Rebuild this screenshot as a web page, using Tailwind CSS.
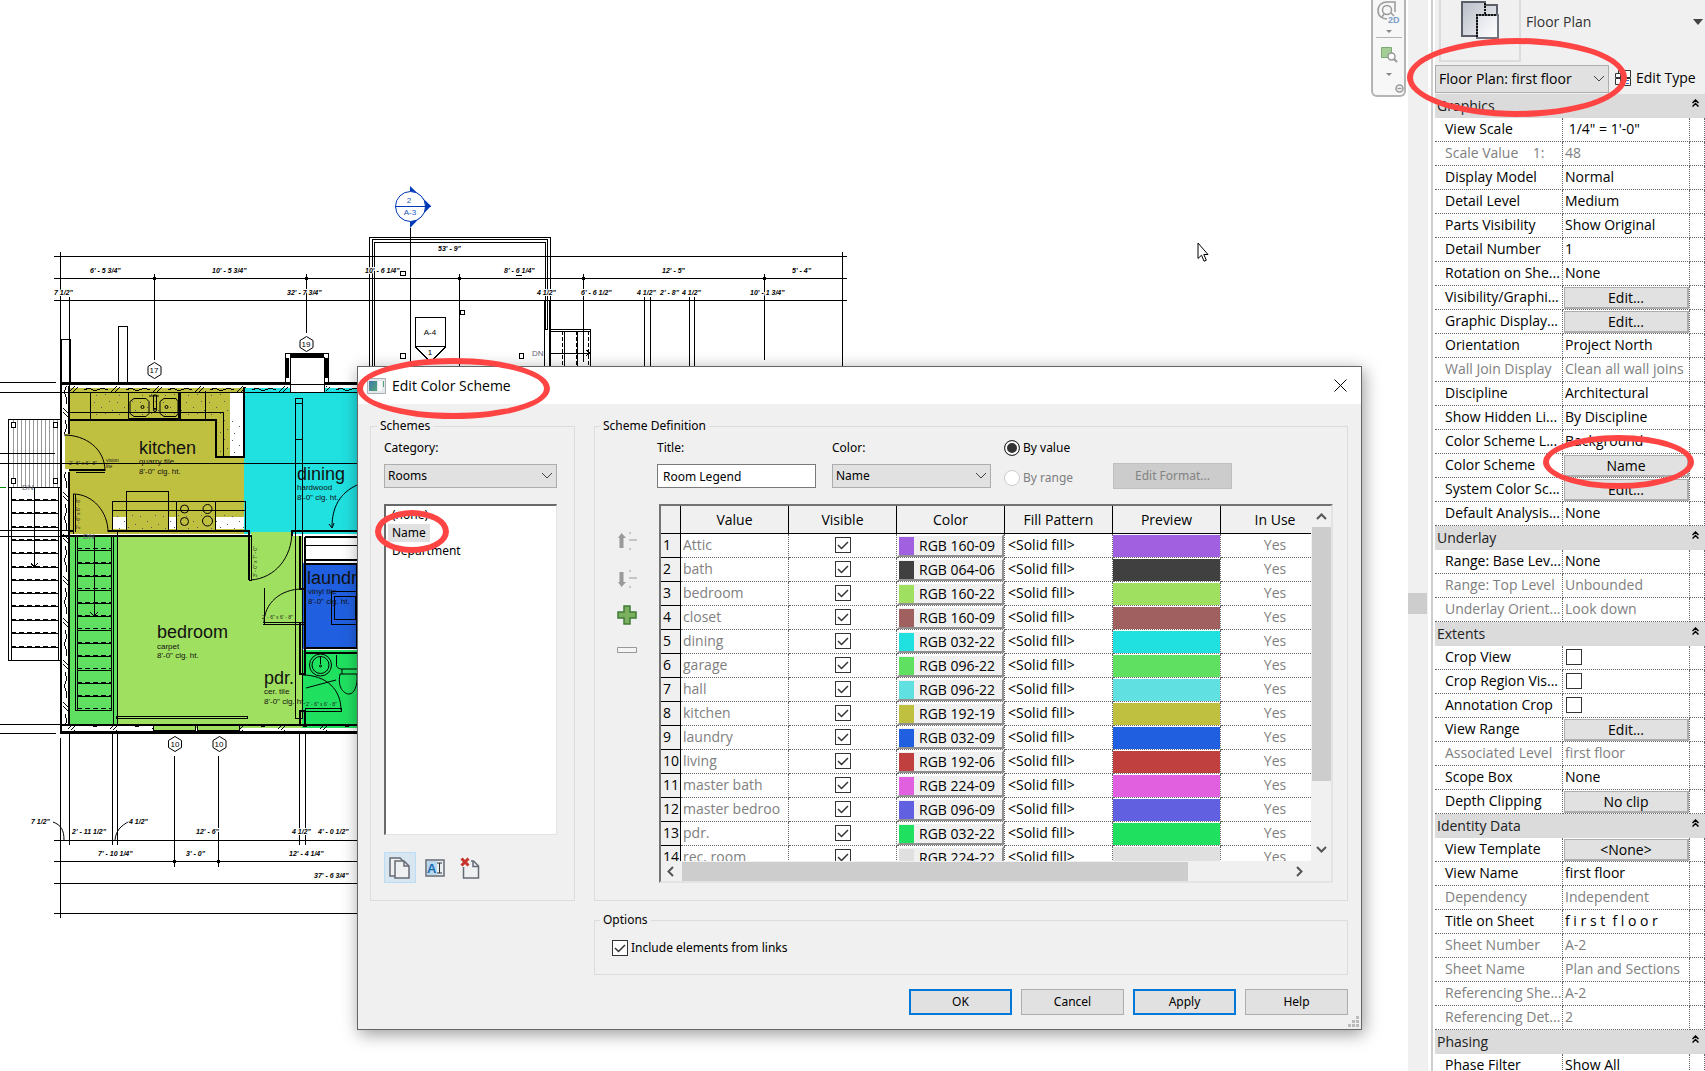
<!DOCTYPE html>
<html lang="en">
<head>
<meta charset="utf-8">
<title>Edit Color Scheme</title>
<script src="https://cdn.jsdelivr.net/npm/@tailwindcss/browser@4"></script>
</head>
<body class="relative flex h-screen overflow-hidden bg-white font-['Open_Sans',sans-serif] text-sm text-black">

<!-- Drawing area -->
<main class="relative min-w-0 flex-1 overflow-hidden">
  <svg class="block h-[930px] w-[860px]" viewBox="0 0 860 930" fill="none" stroke="#000" shape-rendering="crispEdges" font-family="Liberation Sans, sans-serif" role="img" aria-label="First floor plan">
    <defs>
      <pattern id="wallH" width="42" height="8" patternUnits="userSpaceOnUse" y="386"><path d="M0 4l5-2 6 3 7-3 6 2M26 7l7-7M29 8l7-7" stroke="#000"/></pattern>
      <pattern id="wallV" width="8" height="42" patternUnits="userSpaceOnUse" x="62"><path d="M3 0l2 7-3 7 3 7-1 5M1 30l6 6M1 34l6 6M6 0v25" stroke="#000"/></pattern>
      <pattern id="stipple" width="23" height="19" patternUnits="userSpaceOnUse"><path d="M2 3h1M9 8h1M17 2h1M13 14h1M4 15h1M20 11h1" stroke="#556"/></pattern>
      <pattern id="deck" width="4" height="8" patternUnits="userSpaceOnUse"><path d="M1.500 0v8" stroke="#999"/></pattern>
    </defs>

    <!-- room fills -->
    <g stroke="none">
      <path fill="#c0c040" d="M65 388h179v146H69v-65h-4z"/>
      <path fill="#fff" d="M230 393h14v64h-14zM113 517h132v12H113z"/>
      <path fill="#c0c040" d="M127 492h42v38h-42zM177 502h39v28h-39z"/>
      <path fill="#20e0e0" d="M244 388h113v146H244z"/>
      <path fill="#fff" d="M290 382h35v10h-35z"/>
      <path fill="#a0e060" d="M117 536h185v192H117zM251 532h41v6h-41z"/>
      <path fill="#60e060" d="M69 536h48v189H69z"/>
      <path fill="#2060e0" d="M303 563h54v86h-54z"/>
      <path fill="#20e060" d="M302 650h55v78h-55z"/>
      <path fill="#fff" d="M305 537h52v24h-52z"/>
      <path fill="url(#stipple)" d="M90 394h140v25H90zM217 420h27v36h-27zM113 511h132v18H113z"/>
      <path fill="url(#wallH)" d="M70 386h220v6H70zM326 386h31v6h-31z"/>
      <path fill="#fff" d="M62 726h92v6H62zM62 386h7v48h-7zM62 472h7v254h-7z"/>
      <path fill="url(#wallH)" d="M62 725h92v7H62zM240 725h117v7H240z"/>
      <path fill="url(#wallV)" d="M62 386h7v48h-7zM62 472h7v254h-7z"/>
      <path fill="url(#deck)" d="M11 420h48v67H11z"/>
    </g>

    <!-- dimension strings, top -->
    <path d="M54 256.500h793M54 278.500h793M54 300.500h793M60.500 252v132M69.500 297v92M154.500 274v86M306.500 274v59M459.500 274v92M583.500 274v88M644.500 297v69M650.500 297v69M689.500 297v69M694.500 297v69M764.500 274v86M842.500 252v114M410.500 228v138"/>
    <!-- garage outline -->
    <path d="M369.500 366V237.500h181V366M372.500 366V239.500h175V329M374.500 366V242.500h171V329h2M544.500 300v66M549.500 300v66"/>
    <path d="M118.500 382v-56h9v56M61.500 382v-43h9v43"/>
    <path d="M415.500 317.500h30v29h-30zM415.500 347l15 15 15-15M400.500 271.500h5v4h-5zM460.500 310.500h4v4h-4zM400.500 353.500h5v5h-5zM519.500 353.500h4v5h-4zM516 275.500h6"/>
    <path d="M550 329.500h40.500V366M550 331.500h40M564.500 331v35M577.500 331v35M550 353.500h40M586 350l4 3-4 3"/>
    <path stroke-dasharray="4 2" d="M562.500 331v35M576.500 331v35M588.500 331v35"/>
    <g fill="#000" stroke="none">
      <circle cx="154.500" cy="278.500" r="2"/><circle cx="306.500" cy="278.500" r="2"/><circle cx="459.500" cy="278.500" r="2"/><circle cx="583.500" cy="278.500" r="2"/><circle cx="764.500" cy="278.500" r="2"/>
    </g>

    <!-- section marker -->
    <g stroke="#0038b8" shape-rendering="auto">
      <path fill="#0038b8" stroke="none" d="M410 186l21 20-21 22z"/>
      <circle cx="410.500" cy="206.500" r="15" fill="#fff"/>
      <path d="M395 206.500h36"/>
    </g>
    <g fill="#2456c0" stroke="none" font-size="8" text-anchor="middle"><text x="409" y="203">2</text><text x="410" y="215">A-3</text></g>

    <!-- bay -->
    <path d="M285.500 382V353.500h43V382M290.500 382v-24.500h34V382"/>
    <path stroke-width="3" d="M290 355.500h34M287.500 358v20M326.500 358v20"/>
    <path d="M290.500 382v10M324.500 382v10M290 384.500h34"/>

    <!-- exterior walls -->
    <path stroke-width="3" d="M60 383.500h230M325 383.500h32M60 732.500h297"/>
    <path stroke-width="2" d="M61 382v352M69 387v47M69 472v253M60 725h297"/>
    <path d="M0 382.500h56M0 392.500h357M0 453.500h55M0 463.500h357M0 530.500h73M0 536.500h60M0 724.500h60M0 733.500h56"/>
    <path stroke="#080" d="M0 487.500h6"/>

    <!-- deck and exterior stair -->
    <path d="M60 419.500H8.500V660.500H60M11.500 487v173M58.500 487v173M34.500 487v80M31 563l3 4 4-4"/>
    <path fill="#fff" d="M11.500 422.500h4v5h-4zM53.500 422.500h4v5h-4zM11.500 478.500h4v5h-4zM53.500 478.500h4v5h-4z"/>
    <path d="M8 487.500h52M11 500.500h47M11 513.500h47M11 527.500h47M11 540.500h47M11 553.500h47M11 567.500h47M11 580.500h47M11 593.500h47M11 606.500h47M11 620.500h47M11 633.500h47M11 647.500h47M11 660.500h47"/>
    <path stroke-dasharray="5 3" d="M11 499.500h47M11 512.500h47M11 526.500h47M11 539.500h47M11 552.500h47M11 566.500h47M11 579.500h47M11 592.500h47M11 605.500h47M11 619.500h47M11 632.500h47M11 646.500h47"/>

    <!-- kitchen -->
    <path d="M69 412.500h154V456M90.500 392v27M205.500 391v28"/>
    <path stroke-width="2" d="M69 420h147v36.500h29M244 387v70M180 392v27"/>
    <path d="M128.500 392.500h50v26h-50zM134 398.500h12l3 3v12l-3 3h-12l-4-3v-12zM164 398.500h12l2 3v12l-2 3h-12l-4-3v-12zM153.500 395h3v14h-3zM149 396h10" shape-rendering="auto"/>
    <g shape-rendering="auto"><circle cx="142.500" cy="407" r="1.500"/><circle cx="166.500" cy="407" r="1.500"/><circle cx="155" cy="410" r="1.500"/></g>
    <path d="M112.500 530v-28.500h133V530M112 510.500h133M126.500 491.500h42v39h-42zM176.500 501.500h39v29h-39z"/>
    <g shape-rendering="auto"><circle cx="184.500" cy="509" r="4"/><circle cx="207.500" cy="509" r="4.500"/><circle cx="184.500" cy="521.500" r="4"/><circle cx="207.500" cy="521" r="5"/></g>
    <path stroke-width="2" d="M108 531h140.500v6M69 531h4M60 536h192M249 537v43M292 536v-5h65M305 537h52M69 470h36"/>
    <path d="M76 472.500h29M73.500 494v40M75.500 494v38M251.500 537v43h-3"/>
    <g shape-rendering="auto">
      <path d="M64 435c22 0 41 14 41 36M73 494c20 0 35 18 35 38M357 485c-17 8-25 22-25 42M329 524l3 4 2-5M251 580c24-2 41-22 41-49M302 589c-21 0-38 14-38 34"/>
    </g>
    <!-- dining partition -->
    <path d="M295.500 398.500h7v320h-7zM295 403.500h7M295 439.500h7"/>

    <!-- interior stair -->
    <path d="M75.500 537v173.500h36V537M77.500 537v173M113.500 537v188M117.500 530v195M94.500 537v79M90 612l4 4 4-4"/>
    <path d="M77 550.500h34M77 563.500h34M77 576.500h34M77 590.500h34M77 603.500h34M77 616.500h34M77 630.500h34M77 643.500h34M77 656.500h34M77 670.500h34M77 683.500h34M77 696.500h34"/>
    <path stroke-dasharray="5 3" d="M77 548.500h34M77 562.500h34M77 575.500h34M77 588.500h34M77 602.500h34M77 615.500h34M77 628.500h34M77 642.500h34M77 655.500h34M77 668.500h34M77 682.500h34M77 695.500h34M77 708.500h34"/>

    <!-- bedroom -->
    <path d="M116.500 716.500h131v2h-131zM263 622.500h42M263 624.500h42M264.500 588v36"/>
    <path stroke-width="2" d="M300 536v53h5v-52M300 622v52h5v-50M305 560h52M305 564h52v84h-52zM300 725v-14h5v14"/>
    <path fill="#a0e060" d="M153.500 725.500h42v5h-42zM197.500 725.500h42v5h-42z"/>
    <!-- laundry and powder room fixtures -->
    <path d="M305 545.500h52M331.500 591.500h26v33h-26zM334.500 596.500h21v23h-21z"/>
    <path stroke-width="2" d="M357 653h-52v22"/>
    <g shape-rendering="auto">
      <circle cx="320.500" cy="665" r="11"/><circle cx="320.500" cy="665" r="8.500"/><circle cx="320.500" cy="666" r="1"/><path d="M320.500 656v8M336.500 655v10c0 2 2 4 5 4h16M342 669v5M340 674c-3 15 5 20 9 20 5 0 9-8 8-20zM302 675c25 0 39 15 39 35M306 688l30-8"/>
    </g>
    <path d="M305 708.500h36v3h-36z"/>

    <!-- dimension strings, bottom -->
    <path d="M54 840.500h303M54 861.500h303M54 883.500h303M54 913.500h303M60.500 738v180M69.500 733v112M112.500 733v112M117.500 733v112M174.500 756v111M218.500 756v111M299.500 733v112M305.500 733v112"/>
    <path d="M53 822c8 3 11 8 11 18M130 821c-10 5-14 10-15 19" shape-rendering="auto"/>
    <g fill="#000" stroke="none"><circle cx="174.500" cy="861.500" r="2"/><circle cx="218.500" cy="861.500" r="2"/></g>

    <!-- window tags -->
    <g fill="#fff" shape-rendering="auto">
      <path d="M154.500 362.500l6.500 4v8l-6.500 4-6.500-4v-8zM306.500 336.500l6.500 4v7l-6.500 4-6.500-4v-7zM175 736.500l6.500 4v7l-6.500 4-6.500-4v-7zM219.500 736.500l6.500 4v7l-6.500 4-6.500-4v-7z"/>
    </g>
    <g fill="#000" stroke="none" font-size="8" text-anchor="middle">
      <text x="154" y="373">17</text><text x="306" y="347">19</text><text x="175" y="747">10</text><text x="219" y="747">10</text>
      <text x="430" y="335">A-4</text><text x="430" y="355">1</text>
    </g>

    <!-- dimension text -->
    <g fill="#000" stroke="#fff" stroke-width="2" paint-order="stroke" font-size="7" font-weight="700" font-style="italic">
      <text x="90" y="273">6' - 5 3/4"</text><text x="212" y="273">10' - 5 3/4"</text><text x="365" y="273">10' - 6 1/4"</text><text x="504" y="273">8' - 6 1/4"</text><text x="662" y="273">12' - 5"</text><text x="792" y="273">5' - 4"</text>
      <text x="438" y="251">53' - 9"</text>
      <text x="54" y="295">7 1/2"</text><text x="287" y="295">32' - 7 3/4"</text><text x="537" y="295">4 1/2"</text><text x="581" y="295">6' - 6 1/2"</text><text x="637" y="295">4 1/2"</text><text x="660" y="295">2' - 8"</text><text x="682" y="295">4 1/2"</text><text x="750" y="295">10' - 1 3/4"</text>
      <text x="31" y="824">7 1/2"</text><text x="129" y="824">4 1/2"</text><text x="72" y="834">2' - 11 1/2"</text><text x="196" y="834">12' - 6"</text><text x="292" y="834">4 1/2"</text><text x="318" y="834">4' - 0 1/2"</text>
      <text x="98" y="856">7' - 10 1/4"</text><text x="186" y="856">3' - 0"</text><text x="289" y="856">12' - 4 1/4"</text><text x="314" y="878">37' - 6 3/4"</text>
    </g>

    <!-- room tags -->
    <g fill="#111" stroke="none" font-size="18">
      <text x="139" y="454">kitchen</text><text x="297" y="480">dining</text><text x="157" y="638">bedroom</text><text x="264" y="684">pdr.</text><text x="307" y="584">laundry</text>
    </g>
    <g fill="#111" stroke="none" font-size="8">
      <text x="139" y="464">quarry tile</text><text x="139" y="474">8'-0" clg. ht.</text>
      <text x="297" y="490">hardwood</text><text x="297" y="500">8'-0" clg. ht.</text>
      <text x="157" y="649">carpet</text><text x="157" y="658">8'-0" clg. ht.</text>
      <text x="264" y="694">cer. tile</text><text x="264" y="704">8'-0" clg. ht.</text>
      <text x="308" y="594">vinyl tile</text><text x="308" y="604">8'-0" clg. ht.</text>
      <g fill="#667"><text x="22" y="490">DN</text><text x="532" y="356">DN</text><text x="83" y="539">DN</text></g>
    </g>
    <g fill="#222" stroke="none" font-size="5">
      <text x="69" y="465">2'- 6" x 6'- 8"</text><text x="106" y="462">vision</text><text x="106" y="468">lite</text>
      <text x="262" y="619">2' - 6" x 6' - 8"</text><text x="306" y="706">2' - 6" x 6' - 8"</text>
      <text transform="translate(80 529) rotate(-90)">2' - 6" x 6' - 8"</text><text transform="translate(257 577) rotate(-90)">3' - 0" x 7' - 0"</text>
    </g>
  </svg>

  <!-- Mouse pointer -->
  <svg class="absolute top-[242px] left-[1197px] h-[20px] w-[12px]" viewBox="0 0 12 20" fill="#fff" stroke="#000"><path d="M1 1v15.500l3.500-3.300 2.500 6 2.300-1-2.500-5.700H11z"/></svg>

  <!-- Navigation bar -->
  <nav class="absolute top-0 right-[2px] flex h-[97px] w-[35px] flex-col items-center rounded-b-md border-2 border-t-0 border-[#b4b4b4] bg-[#f7f7f7]">
    <button aria-label="Steering wheel" class="block h-[25px] w-[26px]">
      <svg class="h-[25px] w-[26px]" viewBox="0 0 26 25" fill="none" stroke="#9a9a9a" stroke-width="1.500"><path d="M11 19C6 19 2 16 2 10.500 2 5 6 2 11 2h8v10"/><circle cx="11" cy="10" r="4.500"/><path d="M6 17l2-3M15 13l3 3"/><text x="12" y="23" font-family="Liberation Sans, sans-serif" font-size="9" font-weight="700" fill="#7c9cc8" stroke="none">2D</text></svg>
    </button>
    <svg class="mt-[5px] h-[3px] w-[6px]" viewBox="0 0 6 3" fill="#888"><path d="M0 0h6L3 3z"/></svg>
    <div class="mt-1 h-px w-[26px] bg-[#b4b4b4]"></div>
    <button aria-label="Zoom region" class="mt-2 block h-[17px] w-[18px]">
      <svg class="h-[17px] w-[18px]" viewBox="0 0 18 17"><path fill="#a3cf97" stroke="#7fa877" d="M1.500 1.500h10v10h-10z"/><circle cx="11.500" cy="10.500" r="3.500" fill="#fff" stroke="#999" stroke-width="1.500"/><path d="M14 13l3 3" stroke="#999" stroke-width="2"/></svg>
    </button>
    <svg class="mt-[10px] h-[3px] w-[6px]" viewBox="0 0 6 3" fill="#888"><path d="M0 0h6L3 3z"/></svg>
    <svg class="mt-auto mb-[2px] ml-[22px] h-[9px] w-[9px]" viewBox="0 0 9 9" fill="none" stroke="#999" stroke-width="1.500"><circle cx="4.500" cy="4.500" r="3.500"/><path d="M2.500 4.500h4"/></svg>
  </nav>
</main>

<!-- Drawing area scrollbar -->
<div class="w-[20px] shrink-0 bg-[#f0f0f0] pt-[593px]"><div class="h-[21px] w-[19px] bg-[#cdcdcd]"></div></div>

<!-- Properties palette -->
<aside class="relative ml-[3px] w-[274px] shrink-0 border-l-2 border-[#cdcdcd] bg-white pl-[2px]">
  <header class="flex h-[64px] items-start bg-[#f0f0f0] pl-1">
    <div class="flex h-[62px] w-[82px] justify-center border-2 border-t-0 border-[#dcdcdc]">
      <svg class="h-[40px] w-[40px]" viewBox="0 0 40 40"><defs><linearGradient id="fp" x1="0" y1="0" x2="1" y2="1"><stop offset="0" stop-color="#b9bec8"/><stop offset="1" stop-color="#f4f5f7"/></linearGradient><linearGradient id="fq" x1="0" y1="0" x2="1" y2="1"><stop offset="0" stop-color="#dfe2e8"/><stop offset="1" stop-color="#fff"/></linearGradient></defs><path fill="url(#fp)" stroke="#5a5e68" stroke-width="2" d="M2 2h23v3h12v33H17v-2H2z"/><path fill="url(#fq)" stroke="#70747e" stroke-width="2" d="M17 15h21v23H17z"/><path d="M25 3v12M17 37V15h20" fill="none" stroke="#111" stroke-width="2" stroke-dasharray="2 1"/></svg>
    </div>
    <span class="ml-[5px] pt-[12px] leading-5 text-[#333]">Floor Plan</span>
    <svg class="mt-[19px] mr-[2px] ml-auto h-[6px] w-[10px]" viewBox="0 0 10 6" fill="#444"><path d="M0 0h10L5 6z"/></svg>
  </header>
  <div class="flex h-[30px] items-center bg-[#f0f0f0]">
    <div class="grid w-[174px] items-center">
      <select aria-label="Instance" class="col-start-1 row-start-1 h-[28px] appearance-none border border-[#adadad] bg-[#e1e1e1] pl-[3px] text-sm"><option>Floor Plan: first floor</option></select>
      <svg class="pointer-events-none col-start-1 row-start-1 mr-[5px] h-[6px] w-[10px] justify-self-end" viewBox="0 0 10 6" fill="none" stroke="#444"><path d="M0 0l5 5 5-5"/></svg>
    </div>
    <button class="ml-[6px] flex items-center gap-[5px] pb-[2px] whitespace-nowrap">
      <svg class="h-[16px] w-[16px]" viewBox="0 0 16 16" fill="#fff" stroke="#333"><path d="M.5 3.500h5v4h-5zM.5 8.500h5v6h-5zM3.500.5h12v7h-10v-4h-2zM5.500 8.500h10v7h-10z"/><path d="M11 10.500h3M11 13.500h3" stroke="#36c"/></svg>
      Edit Type
    </button>
  </div>
  <table class="w-[270px] table-fixed border-separate border-spacing-0 whitespace-nowrap">
    <colgroup><col class="w-[128px]"><col class="w-[127px]"><col class="w-[15px]"></colgroup>
    <tbody id="props"></tbody>
  </table>
  <div class="pointer-events-none absolute top-[38px] left-[-26px] h-[79px] w-[220px] rounded-[50%] border-6 border-[#ff4444]"></div>
  <div class="pointer-events-none absolute top-[435px] left-[110px] h-[54px] w-[151px] rounded-[50%] border-6 border-[#ff4444]"></div>
</aside>

<!-- Edit Color Scheme dialog -->
<section role="dialog" aria-labelledby="dlg" class="absolute top-[366px] left-[357px] w-[1005px] border border-[#666] bg-[#f0f0f0] font-['Noto_Sans',sans-serif] text-xs leading-4 shadow-[2px_4px_16px_rgba(0,0,0,0.4)]">
  <header class="flex h-[37px] items-center bg-white pr-[14px] pl-[9px]">
    <svg class="h-[16px] w-[19px]" viewBox="0 0 19 16"><defs><linearGradient id="ic" x1="0" y1="0" x2="1" y2="1"><stop offset="0" stop-color="#4477a8"/><stop offset="1" stop-color="#4fa67a"/></linearGradient></defs><path d="M.5.5h18v15H.5z" fill="#e4e8ea" stroke="#aab0b4"/><path d="M2 3h8v10H2z" fill="url(#ic)"/><path d="M11 3h4v10h-4z" fill="#f8f8f8"/><path d="M16 3h1v6h-1z" fill="#4fa67a"/></svg>
    <h1 id="dlg" class="ml-[6px] font-['Open_Sans',sans-serif] text-sm">Edit Color Scheme</h1>
    <button aria-label="Close" class="ml-auto"><svg class="h-[13px] w-[13px]" viewBox="0 0 13 13" fill="none" stroke="#000"><path d="M.5.5l12 12M12.500.5l-12 12"/></svg></button>
  </header>

  <div class="grid grid-cols-[205px_1fr] gap-x-[19px] gap-y-[11px] pt-[14px] pr-[13px] pl-3">
    <fieldset class="border border-[#dcdcdc] pr-[17px] pb-4 pl-[13px]">
      <legend class="-ml-[7px] px-[3px]">Schemes</legend>
      <label for="cat" class="block pt-[5px] pb-[7px] leading-[18px]">Category:</label>
      <div class="grid items-center">
        <select id="cat" class="col-start-1 row-start-1 h-[24px] appearance-none border border-[#adadad] bg-[#e1e1e1] pl-[3px]"><option>Rooms</option></select>
        <svg class="pointer-events-none col-start-1 row-start-1 mr-[5px] h-[6px] w-[10px] justify-self-end" viewBox="0 0 10 6" fill="none" stroke="#444"><path d="M0 0l5 5 5-5"/></svg>
      </div>
      <ul role="listbox" aria-label="Schemes" class="mt-4 flex h-[331px] flex-col items-start border-t-2 border-r border-b border-l-2 border-t-[#696969] border-r-[#e3e3e3] border-b-[#e3e3e3] border-l-[#696969] bg-white pl-[2px] leading-[18px]">
        <li role="option" class="px-1">(none)</li>
        <li role="option" aria-selected="true" class="bg-[#e1e1e1] px-1">Name</li>
        <li role="option" class="px-1">Department</li>
      </ul>
      <div class="mt-[17px] flex gap-[3px]">
        <button aria-label="Duplicate" class="flex h-[31px] w-[32px] items-center justify-center border border-[#bcdcf4] bg-[#d8e6f2]">
          <svg class="h-[22px] w-[22px]" viewBox="0 0 22 22" fill="#eef0f2" stroke="#666a74" stroke-width="1.500"><path d="M1 1h10l3 3v15H1z"/><path d="M6 4h9l5 5v12H6z"/><path d="M15 4v5h5" fill="none"/></svg>
        </button>
        <button aria-label="Rename" class="flex h-[31px] w-[32px] items-center justify-center">
          <svg class="h-[18px] w-[20px]" viewBox="0 0 20 18"><path d="M1 1h18v16H1z" fill="#e8eef2" stroke="#666a74" stroke-width="1.500"/><path d="M2 2h10v14H2z" fill="#b8d8ec"/><text x="2" y="14" font-size="13" font-weight="700" font-family="Liberation Sans, sans-serif" fill="#1c6cb4">A</text><path d="M12 4h2.500M17 4h-2.500v10M12 14h5" fill="none" stroke="#333"/></svg>
        </button>
        <button aria-label="Delete" class="flex h-[31px] w-[32px] items-center justify-center">
          <svg class="h-[22px] w-[20px]" viewBox="0 0 20 22"><path d="M3.500 10v11h15V9l-5-5H11" fill="#eef0f2" stroke="#666a74" stroke-width="1.500"/><path d="M13 4v5.500h5.500" fill="none" stroke="#666a74" stroke-width="1.500"/><path d="M1.500 1.500l7 7M8.500 1.500l-7 7" stroke="#c8342c" stroke-width="3"/></svg>
        </button>
      </div>
    </fieldset>

    <fieldset class="min-w-0 border border-[#dcdcdc] pr-[14px] pb-[17px] pl-[22px]">
      <legend class="-ml-[17px] px-[3px]">Scheme Definition</legend>
      <div class="flex gap-5">
        <div class="flex w-5 shrink-0 flex-col pt-[98px]">
          <button aria-label="Move up"><svg class="h-[20px] w-[20px]" viewBox="0 0 20 20" fill="#999"><path d="M4.500 1L9 6H6.500v10h-4V6H1z"/><path d="M12 7.500h8v1h-8zM12 .5h2v1h-2zM12 16.500h2v1h-2z"/></svg></button>
          <button aria-label="Move down" class="mt-[18px]"><svg class="h-[20px] w-[20px]" viewBox="0 0 20 20" fill="#999"><path d="M4.500 17L9 12H6.500V2h-4v10H1z"/><path d="M12 7.500h8v1h-8zM12 .5h2v1h-2zM12 16.500h2v1h-2z"/></svg></button>
          <button aria-label="Add value" class="mt-[15px]"><svg class="h-[20px] w-[20px]" viewBox="0 0 20 20"><path d="M7 1h6v6h6v6h-6v6H7v-6H1V7h6z" fill="#7cb060" stroke="#3f7a34" stroke-width="1.500"/></svg></button>
          <button aria-label="Remove value" class="mt-[22px]"><svg class="h-[7px] w-[20px]" viewBox="0 0 20 7"><path d="M.5.5h19v5H.5z" fill="#f4f4f4" stroke="#999"/></svg></button>
        </div>
        <div class="min-w-0 flex-1">
          <div class="flex items-start">
            <div class="w-[159px]">
              <label for="ttl" class="block pt-[5px] pb-[7px] leading-[18px]">Title:</label>
              <input id="ttl" value="Room Legend" class="block h-[24px] w-full border border-[#7a7a7a] bg-white pl-[5px]">
            </div>
            <div class="ml-4 w-[159px]">
              <label for="clr" class="block pt-[5px] pb-[7px] leading-[18px]">Color:</label>
              <div class="grid items-center">
                <select id="clr" class="col-start-1 row-start-1 h-[24px] appearance-none border border-[#adadad] bg-[#e1e1e1] pl-[3px]"><option>Name</option></select>
                <svg class="pointer-events-none col-start-1 row-start-1 mr-[5px] h-[6px] w-[10px] justify-self-end" viewBox="0 0 10 6" fill="none" stroke="#444"><path d="M0 0l5 5 5-5"/></svg>
              </div>
            </div>
            <div class="ml-[13px] flex w-[109px] flex-col gap-[14px] pt-[6px]">
              <label class="flex items-center gap-[3px]"><input type="radio" name="by" checked class="m-0 h-4 w-4 appearance-none rounded-full border border-[#333] bg-[#333] shadow-[inset_0_0_0_2px_#fff]">By value</label>
              <label class="flex items-center gap-[3px] text-[#7d7d7d]"><input type="radio" name="by" disabled class="m-0 h-4 w-4 appearance-none rounded-full border border-[#ccc] bg-white">By range</label>
            </div>
            <button disabled class="mt-[29px] h-[26px] w-[119px] border border-[#bfbfbf] bg-[#cccccc] text-[#838383]">Edit Format...</button>
          </div>

          <div class="mt-[15px] ml-[2px] grid h-[379px] grid-cols-[1fr_20px] grid-rows-[1fr_20px] border-2 border-t-[#737373] border-r-[#e3e3e3] border-b-[#e3e3e3] border-l-[#737373] font-['Open_Sans',sans-serif] text-sm">
            <div class="min-h-0 min-w-0 overflow-hidden bg-white">
              <table class="w-[668px] table-fixed border-separate border-spacing-0 whitespace-nowrap">
                <colgroup><col class="w-[20px]"><col class="w-[108px]"><col class="w-[108px]"><col class="w-[108px]"><col class="w-[108px]"><col class="w-[108px]"><col class="w-[108px]"></colgroup>
                <thead>
                  <tr class="h-[28px] bg-[#f0f0f0]">
                    <th class="border-r border-b border-black p-0"></th>
                    <th class="border-r border-b border-black p-0 font-normal">Value</th>
                    <th class="border-r border-b border-black p-0 font-normal">Visible</th>
                    <th class="border-r border-b border-black p-0 font-normal">Color</th>
                    <th class="border-r border-b border-black p-0 font-normal">Fill Pattern</th>
                    <th class="border-r border-b border-black p-0 font-normal">Preview</th>
                    <th class="border-b border-black p-0 font-normal">In Use</th>
                  </tr>
                </thead>
                <tbody id="rows"></tbody>
              </table>
            </div>
            <div class="flex flex-col items-center bg-[#f0f0f0]">
              <svg class="mt-[7px] h-[7px] w-[11px]" viewBox="0 0 11 7" fill="none" stroke="#555" stroke-width="2"><path d="M1 6l4.500-4.500L10 6"/></svg>
              <div class="mt-[7px] h-[254px] w-[19px] bg-[#cdcdcd]"></div>
              <svg class="mt-auto mb-[8px] h-[7px] w-[11px]" viewBox="0 0 11 7" fill="none" stroke="#555" stroke-width="2"><path d="M1 1l4.500 4.500L10 1"/></svg>
            </div>
            <div class="flex items-center bg-[#f0f0f0]">
              <svg class="ml-[6px] h-[11px] w-[7px]" viewBox="0 0 7 11" fill="none" stroke="#555" stroke-width="2"><path d="M6 1L1.500 5.500 6 10"/></svg>
              <div class="ml-2 h-[19px] w-[506px] bg-[#cdcdcd]"></div>
              <svg class="mr-[8px] ml-auto h-[11px] w-[7px]" viewBox="0 0 7 11" fill="none" stroke="#555" stroke-width="2"><path d="M1 1l4.500 4.500L1 10"/></svg>
            </div>
            <div class="bg-[#f0f0f0]"></div>
          </div>
        </div>
      </div>
    </fieldset>

    <fieldset class="col-start-2 h-[63px] border border-[#dcdcdc] pl-[17px]">
      <legend class="-ml-[12px] px-[3px]">Options</legend>
      <label class="mt-3 flex items-center gap-[3px]">
        <span class="grid h-4 w-4"><input type="checkbox" checked class="col-start-1 row-start-1 h-4 w-4 appearance-none border border-[#333] bg-white"><svg class="pointer-events-none col-start-1 row-start-1 h-4 w-4" viewBox="0 0 16 16" fill="none" stroke="#333" stroke-width="1.500"><path d="M3 8l3.500 3.500L13 5"/></svg></span>
        Include elements from links
      </label>
    </fieldset>
  </div>

  <footer class="mt-[14px] flex justify-end gap-[9px] pr-[13px] pb-[14px]">
    <button class="h-[26px] w-[103px] border-2 border-[#0078d7] bg-[#e1e1e1]">OK</button>
    <button class="h-[26px] w-[103px] border border-[#adadad] bg-[#e1e1e1]">Cancel</button>
    <button class="h-[26px] w-[103px] border-2 border-[#0078d7] bg-[#e1e1e1]">Apply</button>
    <button class="h-[26px] w-[103px] border border-[#adadad] bg-[#e1e1e1]">Help</button>
  </footer>
  <svg class="absolute right-[2px] bottom-[2px] h-[11px] w-[11px]" viewBox="0 0 11 11" fill="#bbb"><path d="M8 0h3v3H8zM4 4h3v3H4zM8 4h3v3H8zM0 8h3v3H0zM4 8h3v3H4zM8 8h3v3H8z"/></svg>

  <div class="pointer-events-none absolute top-[-9px] left-[-1px] h-[61px] w-[193px] rounded-[50%] border-6 border-[#ff4444]"></div>
  <div class="pointer-events-none absolute top-[143px] left-[17px] h-[43px] w-[74px] rounded-[50%] border-6 border-[#ff4444]"></div>
</section>

<script>
const scheme = [
  ['Attic','RGB 160-09','#a060e0'],['bath','RGB 064-06','#404040'],['bedroom','RGB 160-22','#a0e060'],['closet','RGB 160-09','#a06060'],
  ['dining','RGB 032-22','#20e0e0'],['garage','RGB 096-22','#60e060'],['hall','RGB 096-22','#60e0e0'],['kitchen','RGB 192-19','#c0c040'],
  ['laundry','RGB 032-09','#2060e0'],['living','RGB 192-06','#c04040'],['master bath','RGB 224-09','#e060e0'],['master bedroo','RGB 096-09','#6060e0'],
  ['pdr.','RGB 032-22','#20e060'],['rec. room','RGB 224-22','#e0e0e0']
];
document.getElementById('rows').innerHTML = scheme.map(([name, rgb, color], i) => `
<tr class="h-[24px]">
  <th scope="row" class="border-r border-b border-black bg-[#f0f0f0] p-0 pb-[2px] pl-[2px] text-left font-normal">${i + 1}</th>
  <td class="overflow-hidden border-r border-b border-dotted border-[#666] p-0 pb-[2px] pl-[2px] text-[#808080]">${name}</td>
  <td class="border-r border-b border-dotted border-[#666] p-0 pb-px"><label class="mx-auto grid h-4 w-4"><input type="checkbox" checked aria-label="Show ${name}" class="col-start-1 row-start-1 h-4 w-4 appearance-none border border-[#333] bg-white"><svg class="pointer-events-none col-start-1 row-start-1 h-4 w-4" viewBox="0 0 16 16" fill="none" stroke="#333" stroke-width="1.500"><path d="M3 8l3.500 3.500L13 5"/></svg></label></td>
  <td class="border-r border-b border-dotted border-[#666] p-0"><button class="flex h-[23px] w-full items-center border-2 border-t-white border-r-[#909090] border-b-[#909090] border-l-white bg-[#f0f0f0]"><span class="h-[18px] w-[15px]" style="background:${color}"></span><span class="ml-[5px]">${rgb}</span></button></td>
  <td class="border-r border-b border-dotted border-[#666] p-0 pb-[2px] pl-[3px]">&lt;Solid fill&gt;</td>
  <td class="border-r border-b border-dotted border-[#666] p-0 pt-px"><div class="h-[22px]" style="background:${color}"></div></td>
  <td class="border-b border-dotted border-[#666] p-0 pb-[2px] text-center text-[#808080]">Yes</td>
</tr>`).join('');

// kind: h = group heading, b = button, c = tick box, d = read-only, t = text
const props = [
  ['h','Graphics'],['t','View Scale','&nbsp;1/4" = 1\'-0"'],['d','Scale Value &nbsp;&nbsp; 1:','48'],['t','Display Model','Normal'],['t','Detail Level','Medium'],
  ['t','Parts Visibility','Show Original'],['t','Detail Number','1'],['t','Rotation on She...','None'],['b','Visibility/Graphi...','Edit...'],['b','Graphic Display...','Edit...'],
  ['t','Orientation','Project North'],['d','Wall Join Display','Clean all wall joins'],['t','Discipline','Architectural'],['t','Show Hidden Li...','By Discipline'],
  ['t','Color Scheme L...','Background'],['b','Color Scheme','Name'],['b','System Color Sc...','Edit...'],['t','Default Analysis...','None'],
  ['h','Underlay'],['t','Range: Base Lev...','None'],['d','Range: Top Level','Unbounded'],['d','Underlay Orient...','Look down'],
  ['h','Extents'],['c','Crop View'],['c','Crop Region Vis...'],['c','Annotation Crop'],['b','View Range','Edit...'],['d','Associated Level','first floor'],
  ['t','Scope Box','None'],['b','Depth Clipping','No clip'],
  ['h','Identity Data'],['b','View Template','&lt;None&gt;'],['t','View Name','first floor'],['d','Dependency','Independent'],['t','Title on Sheet','f i r s t &nbsp;f l o o r'],
  ['d','Sheet Number','A-2'],['d','Sheet Name','Plan and Sections'],['d','Referencing She...','A-2'],['d','Referencing Det...','2'],
  ['h','Phasing'],['t','Phase Filter','Show All']
];
document.getElementById('props').innerHTML = props.map(([kind, label, value]) => {
  if (kind === 'h') return `
<tr class="h-[24px] bg-[#dbdbdb]"><th scope="rowgroup" colspan="3" class="p-0 pl-[2px] font-normal"><div class="flex items-center justify-between pr-[6px] text-[#222]">${label}<svg class="mb-[6px] h-[8px] w-[7px]" viewBox="0 0 7 8" fill="none" stroke="#000" stroke-width="1.500"><path d="M.5 4l3-3 3 3M.5 7.500l3-3 3 3"/></svg></div></th></tr>`;
  const cell = kind === 'b' ? `<button class="block h-[22px] w-[125px] border border-r-2 border-b-2 border-[#adadad] bg-[#e1e1e1] pt-px leading-[18px]">${value}</button>`
    : kind === 'c' ? `<input type="checkbox" aria-label="${label}" class="ml-px block h-4 w-4 appearance-none border border-[#333] bg-white">` : value;
  const pad = kind === 'b' ? 'pt-px pl-px' : kind === 'c' ? 'pb-[2px] pl-[2px]' : 'pb-[2px] pl-[2px]';
  return `
<tr class="${kind === 'd' ? 'h-[24px] text-[#808080]' : 'h-[24px]'}">
  <th scope="row" class="border-r border-b border-dotted border-[#666] p-0 pb-[2px] pl-[10px] text-left font-normal">${label}</th>
  <td class="border-r border-b border-dotted border-[#666] p-0 ${pad}">${cell}</td>
  <td class="border-r border-b border-dotted border-[#666] p-0"></td>
</tr>`;
}).join('');
</script>
</body>
</html>
